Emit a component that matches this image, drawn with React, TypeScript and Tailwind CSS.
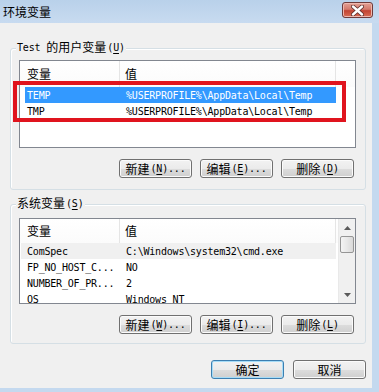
import React from "react";

const CJK = "font-['Noto_Sans_CJK_SC',sans-serif]";
const MONO = "font-['DejaVu_Sans_Mono','Noto_Sans_CJK_SC',monospace]";
const MONO_SIZE = "text-[10px] tracking-[-0.2px]";

type Row = { name: string; value: string };

const userVars: Row[] = [
  { name: "TEMP", value: "%USERPROFILE%\\AppData\\Local\\Temp" },
  { name: "TMP", value: "%USERPROFILE%\\AppData\\Local\\Temp" },
];

const systemVars: Row[] = [
  { name: "ComSpec", value: "C:\\Windows\\system32\\cmd.exe" },
  { name: "FP_NO_HOST_C...", value: "NO" },
  { name: "NUMBER_OF_PR...", value: "2" },
  { name: "OS", value: "Windows_NT" },
];

function Accel({ label, keyChar, dots }: { label: string; keyChar: string; dots?: boolean }) {
  return (
    <span className="inline-flex items-center whitespace-nowrap">
      <span className={`${CJK} text-[12px]`}>{label}</span>
      <span className={`${MONO} ${MONO_SIZE} ml-[1px]`}>
        (<span className="underline underline-offset-[2px]">{keyChar}</span>){dots ? "..." : ""}
      </span>
    </span>
  );
}

function WinButton({ children, primary }: { children: React.ReactNode; primary?: boolean }) {
  return (
    <button
      type="button"
      className={`w-[73px] h-[19px] rounded-[3px] border flex items-center justify-center text-black leading-none bg-[linear-gradient(#f2f2f2_0%,#ebebeb_50%,#dddddd_50%,#cfcfcf_100%)] ${
        primary
          ? "border-[#3c7fb1] shadow-[inset_0_0_0_1px_#a6dcf7]"
          : "border-[#707070] shadow-[inset_0_0_0_1px_#fbfbfb]"
      }`}
    >
      {children}
    </button>
  );
}

function ListView({
  rows,
  height,
  headerHeight,
  scroll,
  selected,
}: {
  rows: Row[];
  height: string;
  headerHeight: string;
  scroll?: boolean;
  selected: "focus" | "blur";
}) {
  return (
    <div className={`w-[337px] ${height} border border-[#828790] bg-white flex overflow-hidden`}>
      <div className="flex-1 flex flex-col min-w-0">
        <div className={`${headerHeight} flex shrink-0 bg-[linear-gradient(#ffffff,#fbfbfb)]`}>
          <div className={`w-[100px] pl-[7px] flex items-center border-r border-[#e5e5e5] ${CJK} text-[12px] text-black`}>
            变量
          </div>
          <div className={`w-[216px] pl-[5px] flex items-center border-r border-[#e5e5e5] ${CJK} text-[12px] text-black`}>
            值
          </div>
          <div className="flex-1" />
        </div>
        {rows.map((row, i) => {
          const isSel = i === 0;
          const rowBg =
            isSel && selected === "focus"
              ? "ml-[5px] w-[311px] bg-[#3399ff] text-white"
              : isSel
                ? "ml-[1px] w-[315px] bg-[#f0f0f0] text-black"
                : "ml-[1px] w-[315px] text-black";
          return (
            <div key={row.name} className={`h-[16px] shrink-0 flex items-center ${rowBg} ${MONO} ${MONO_SIZE}`}>
              <div className={`${isSel && selected === "focus" ? "w-[96px] pl-[2px]" : "w-[100px] pl-[6px]"} whitespace-nowrap`}>
                {row.name}
              </div>
              <div className="pl-[5px] whitespace-nowrap">{row.value}</div>
            </div>
          );
        })}
      </div>
      {scroll ? (
        <div className="w-[17px] flex flex-col bg-[#f0f0f0] border-l border-[#e9e9e9]">
          <div className="h-[17px] flex items-center justify-center">
            <svg width="7" height="4" viewBox="0 0 7 4">
              <path d="M0 4 L3.5 0 L7 4 Z" fill="#5a5a5a" />
            </svg>
          </div>
          <div className="mx-[1px] h-[17px] rounded-[2px] border border-[#959595] bg-[linear-gradient(90deg,#f4f4f4,#e8e8e8_50%,#d9d9d9)]" />
          <div className="flex-1" />
          <div className="h-[17px] flex items-center justify-center">
            <svg width="7" height="4" viewBox="0 0 7 4">
              <path d="M0 0 L7 0 L3.5 4 Z" fill="#5a5a5a" />
            </svg>
          </div>
        </div>
      ) : null}
    </div>
  );
}

function GroupBox({
  title,
  className,
  children,
}: {
  title: React.ReactNode;
  className: string;
  children: React.ReactNode;
}) {
  return (
    <div className={`relative ml-[10px] w-[356px] rounded-[3px] border border-[#d5dfe5] shadow-[inset_1px_1px_0_#ffffff] ${className}`}>
      <div className="absolute left-[5px] top-[-9px] h-[14px] px-[1px] bg-[#f0f0f0] flex items-center text-black">{title}</div>
      {children}
    </div>
  );
}

export default function App() {
  return (
    <div className="w-[379px] h-[392px] bg-[#c4d9ef] flex flex-col overflow-hidden">
      <div className="h-[23px] shrink-0 flex items-center justify-between pl-[3px] bg-[linear-gradient(#b9d1ea,#c8dbf0)]">
        <span className={`${CJK} text-[12px] text-black leading-none`}>环境变量</span>
        <div className="mr-[6px] mt-[-3px] w-[31px] h-[16px] rounded-[3px] border border-[#6e3b3b] bg-[linear-gradient(#e3a195_0%,#d47a6c_45%,#c24433_55%,#d86d55_100%)] flex items-center justify-center shadow-[inset_0_0_0_1px_#eeb7ae]">
          <svg width="13" height="11" viewBox="0 0 13 11">
            <path d="M2 1.5 L11 9.5 M11 1.5 L2 9.5" stroke="#5a2a28" strokeWidth="4" strokeLinecap="round" />
            <path d="M2 1.5 L11 9.5 M11 1.5 L2 9.5" stroke="#ffffff" strokeWidth="2.4" strokeLinecap="round" />
          </svg>
        </div>
      </div>

      <div className="relative w-[372px] h-[365px] bg-[#f0f0f0] flex flex-col">
        <GroupBox
          className="mt-[25px] pt-[11px] pb-[11px]"
          title={
            <span className="inline-flex items-center whitespace-nowrap">
              <span className={`${MONO} ${MONO_SIZE} mr-[6px]`}>Test</span>
              <Accel label="的用户变量" keyChar="U" />
            </span>
          }
        >
          <div className="pl-[8px]">
            <ListView rows={userVars} height="h-[88px]" headerHeight="h-[26px]" selected="focus" />
          </div>
          <div className="mt-[11px] flex justify-end gap-[8px] pr-[11px]">
            <WinButton>
              <Accel label="新建" keyChar="N" dots />
            </WinButton>
            <WinButton>
              <Accel label="编辑" keyChar="E" dots />
            </WinButton>
            <WinButton>
              <Accel label="删除" keyChar="D" />
            </WinButton>
          </div>
        </GroupBox>

        <GroupBox className="mt-[14px] pt-[13px] pb-[9px]" title={<Accel label="系统变量" keyChar="S" />}>
          <div className="pl-[8px]">
            <ListView rows={systemVars} height="h-[86px]" headerHeight="h-[24px]" scroll selected="blur" />
          </div>
          <div className="mt-[11px] flex justify-end gap-[8px] pr-[11px]">
            <WinButton>
              <Accel label="新建" keyChar="W" dots />
            </WinButton>
            <WinButton>
              <Accel label="编辑" keyChar="I" dots />
            </WinButton>
            <WinButton>
              <Accel label="删除" keyChar="L" />
            </WinButton>
          </div>
        </GroupBox>

        <div className="mt-[16px] flex justify-end gap-[9px] pr-[6px]">
          <WinButton primary>
            <span className={`${CJK} text-[12px]`}>确定</span>
          </WinButton>
          <WinButton>
            <span className={`${CJK} text-[12px]`}>取消</span>
          </WinButton>
        </div>

        <div className="absolute left-[13px] top-[58px] w-[333px] h-[41px] border-[4px] border-[#e0141e] pointer-events-none" />
      </div>
    </div>
  );
}
